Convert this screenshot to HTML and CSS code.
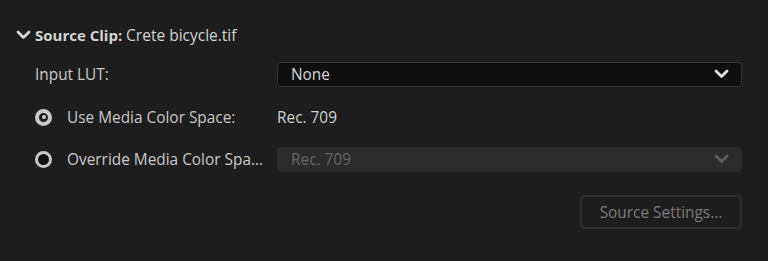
FILE: index.html
```html
<!DOCTYPE html>
<html>
<head>
<meta charset="utf-8">
<link rel="stylesheet" href="styles.css">
</head>
<body>
<div class="panel">
  <div class="title">
    <svg class="chev" width="15" height="10" viewBox="0 0 15 10"><path d="M2 2 L7.5 7.5 L13 2" fill="none" stroke="#d8d8d8" stroke-width="2.8" stroke-linecap="round" stroke-linejoin="round"/></svg>
    <span class="bold">Source Clip:</span>&nbsp;<span class="regular">Crete bicycle.tif</span>
  </div>
  <div class="row lut">
    <div class="label">Input LUT:</div>
    <div class="select">
      <span>None</span>
      <svg width="15" height="10" viewBox="0 0 15 10"><path d="M2 2 L7.5 7.5 L13 2" fill="none" stroke="#e0e0e0" stroke-width="2.8" stroke-linecap="round" stroke-linejoin="round"/></svg>
    </div>
  </div>
  <div class="row r1">
    <div class="label radio-label"><span class="radio on"></span>Use Media Color Space:</div>
    <div class="value">Rec. 709</div>
  </div>
  <div class="row r2">
    <div class="label radio-label"><span class="radio"></span>Override Media Color Spa...</div>
    <div class="select disabled">
      <span>Rec. 709</span>
      <svg width="15" height="10" viewBox="0 0 15 10"><path d="M2 2 L7.5 7.5 L13 2" fill="none" stroke="#5e5e5e" stroke-width="2.8" stroke-linecap="round" stroke-linejoin="round"/></svg>
    </div>
  </div>
  <div class="actions">
    <div class="btn">Source Settings...</div>
  </div>
</div>
</body>
</html>
```
FILE: styles.css
```css
html, body {
  margin: 0;
  padding: 0;
  background: #1d1d1d;
}
body {
  width: 768px;
  height: 261px;
  overflow: hidden;
  font-family: "Open Sans", "Noto Sans", sans-serif;
  font-size: 15.4px;
  color: #c9c9c9;
}
.panel {
  padding: 24px 26px 0 16px;
}
.title {
  display: flex;
  align-items: center;
  height: 22px;
  font-size: 15px;
  color: #d4d4d4;
}
.chev {
  margin-right: 4px;
}
.bold {
  font-weight: 700;
}
.regular {
  font-size: 15.5px;
}
.row {
  display: flex;
  align-items: center;
}
.lut {
  margin-top: 15px;
  height: 26px;
}
.label {
  width: 242px;
  padding-left: 19px;
  flex: none;
  white-space: nowrap;
}
.radio-label {
  display: flex;
  align-items: center;
}
.radio {
  width: 11px;
  height: 11px;
  border: 3px solid #c8c8c8;
  border-radius: 50%;
  background: #0f0f0f;
  margin-right: 15px;
  box-sizing: content-box;
  flex: none;
}
.radio.on {
  width: 9px;
  height: 9px;
  border-width: 4px;
  background: #1d1d1d;
  position: relative;
}
.radio.on::after {
  content: "";
  position: absolute;
  left: 2.5px;
  top: 2.5px;
  width: 4px;
  height: 4px;
  border-radius: 50%;
  background: #d0d0d0;
}
.select {
  flex: 1;
  height: 25px;
  box-sizing: border-box;
  border: 1px solid #333;
  border-radius: 4px;
  background: #0e0e0e;
  display: flex;
  align-items: center;
  justify-content: space-between;
  padding: 0 12px 0 13px;
  color: #d6d6d6;
}
.select.disabled {
  background: #2b2b2b;
  border-color: #2b2b2b;
  color: #666;
}
.r1 {
  margin-top: 17px;
  height: 26px;
}
.r2 {
  margin-top: 16px;
  height: 26px;
}
.value {
  color: #d2d2d2;
}
.actions {
  display: flex;
  justify-content: flex-end;
  margin-top: 23px;
}
.btn {
  width: 162px;
  height: 34px;
  box-sizing: border-box;
  border: 2px solid #2f2f2f;
  border-radius: 5px;
  display: flex;
  align-items: center;
  justify-content: center;
  color: #7a7a7a;
}
```
